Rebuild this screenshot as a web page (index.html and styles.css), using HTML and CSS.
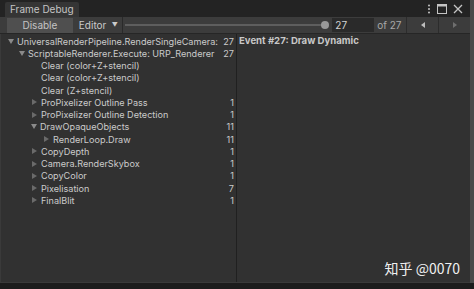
FILE: index.html
```html
<!DOCTYPE html>
<html lang="en">
<head>
    <meta charset="UTF-8">
    <title>Frame Debug</title>
    <link rel="stylesheet" href="styles.css">
</head>
<body>
    <div class="window">
        <div class="titlebar">
            <div class="tab">Frame Debug</div>
            <div class="win-icons">
                <svg width="4" height="10" viewBox="0 0 4 10"><circle cx="2" cy="1.5" r="1" fill="#c4c4c4"/><circle cx="2" cy="5" r="1" fill="#c4c4c4"/><circle cx="2" cy="8.5" r="1" fill="#c4c4c4"/></svg>
                <svg width="10" height="10" viewBox="0 0 10 10"><rect x="0.5" y="0.5" width="9" height="9" fill="none" stroke="#c4c4c4"/><rect x="0.5" y="0.5" width="9" height="2" fill="#c4c4c4"/></svg>
                <svg width="10" height="10" viewBox="0 0 10 10"><path d="M1 1 L9 9 M9 1 L1 9" stroke="#c4c4c4" stroke-width="1.3"/></svg>
            </div>
        </div>

        <div class="toolbar">
            <div class="btn-disable">Disable</div>
            <div class="dropdown">Editor <span class="caret">&#9660;</span></div>
            <div class="slider">
                <div class="track"></div>
                <div class="thumb"></div>
            </div>
            <div class="num-field">27</div>
            <div class="of-label">of 27</div>
            <div class="nav-btn"><span class="tri-left"></span></div>
            <div class="nav-btn"><span class="tri-right"></span></div>
        </div>

        <div class="content">
            <div class="tree">
                <div class="row lvl0"><span class="arrow open"></span><span class="name">UniversalRenderPipeline.RenderSingleCamera:</span><span class="count">27</span></div>
                <div class="row lvl1"><span class="arrow open"></span><span class="name">ScriptableRenderer.Execute: URP_Renderer</span><span class="count">27</span></div>
                <div class="row lvl2"><span class="arrow none"></span><span class="name">Clear (color+Z+stencil)</span><span class="count"></span></div>
                <div class="row lvl2"><span class="arrow none"></span><span class="name">Clear (color+Z+stencil)</span><span class="count"></span></div>
                <div class="row lvl2"><span class="arrow none"></span><span class="name">Clear (Z+stencil)</span><span class="count"></span></div>
                <div class="row lvl2"><span class="arrow"></span><span class="name">ProPixelizer Outline Pass</span><span class="count">1</span></div>
                <div class="row lvl2"><span class="arrow"></span><span class="name">ProPixelizer Outline Detection</span><span class="count">1</span></div>
                <div class="row lvl2"><span class="arrow open"></span><span class="name">DrawOpaqueObjects</span><span class="count">11</span></div>
                <div class="row lvl3"><span class="arrow"></span><span class="name">RenderLoop.Draw</span><span class="count">11</span></div>
                <div class="row lvl2"><span class="arrow"></span><span class="name">CopyDepth</span><span class="count">1</span></div>
                <div class="row lvl2"><span class="arrow"></span><span class="name">Camera.RenderSkybox</span><span class="count">1</span></div>
                <div class="row lvl2"><span class="arrow"></span><span class="name">CopyColor</span><span class="count">1</span></div>
                <div class="row lvl2"><span class="arrow"></span><span class="name">Pixelisation</span><span class="count">7</span></div>
                <div class="row lvl2"><span class="arrow"></span><span class="name">FinalBlit</span><span class="count">1</span></div>
            </div>
            <div class="details">
                <div class="event-title">Event #27: Draw Dynamic</div>
            </div>
        </div>
        <div class="watermark">知乎 @0070</div>
    </div>
</body>
</html>
```

FILE: styles.css
```css
body {
    margin: 0;
    width: 474px;
    height: 289px;
    overflow: hidden;
    background-color: #1c1c1c;
    font-family: Inter, "Noto Sans", "Noto Sans CJK SC", sans-serif;
    color: #cbcbcb;
}
.window {
    position: relative;
    height: 283px;
    display: flex;
    flex-direction: column;
    border-right: 4px solid #4a4a4a;
    box-sizing: border-box;
    width: 474px;
}
.titlebar {
    height: 17px;
    background-color: #232323;
    display: flex;
    align-items: flex-end;
    justify-content: space-between;
    padding-left: 5px;
}
.tab {
    height: 15px;
    width: 74px;
    background-color: #353535;
    border-radius: 2px 2px 0 0;
    font-size: 10px;
    line-height: 15px;
    padding-left: 5px;
    box-sizing: border-box;
    color: #c4c4c4;
}
.win-icons {
    display: flex;
    align-items: center;
    gap: 6px;
    height: 17px;
    padding-right: 7px;
}
.toolbar {
    height: 16px;
    background-color: #3c3c3c;
    border-bottom: 1px solid #262626;
    display: flex;
    align-items: center;
    font-size: 10px;
}
.btn-disable {
    width: 66px;
    height: 15px;
    margin-left: 7px;
    background-color: #4f4f4f;
    text-align: center;
    line-height: 15px;
    color: #c4c4c4;
}
.dropdown {
    width: 48px;
    height: 16px;
    line-height: 16px;
    margin-left: 2px;
    padding-left: 4px;
    box-sizing: border-box;
    border-right: 1px solid #2a2a2a;
    position: relative;
}
.caret {
    position: absolute;
    right: 4px;
    font-size: 6px;
}
.slider {
    position: relative;
    width: 206px;
    height: 16px;
    margin-left: 2px;
}
.track {
    position: absolute;
    left: 0;
    right: 4px;
    top: 7px;
    height: 2px;
    background-color: #5e5e5e;
}
.thumb {
    position: absolute;
    right: 1px;
    top: 4px;
    width: 8px;
    height: 8px;
    border-radius: 50%;
    background-color: #999;
}
.num-field {
    width: 42px;
    height: 14px;
    margin-left: 2px;
    background-color: #2a2a2a;
    line-height: 14px;
    padding-left: 3px;
    box-sizing: border-box;
    font-size: 10px;
    color: #d2d2d2;
}
.of-label {
    width: 29px;
    padding-left: 3px;
    color: #a8a8a8;
}
.nav-btn {
    width: 31px;
    height: 16px;
    border-left: 1px solid #2c2c2c;
    display: flex;
    align-items: center;
    justify-content: center;
}
.tri-left {
    border-top: 3px solid transparent;
    border-bottom: 3px solid transparent;
    border-right: 4px solid #bdbdbd;
}
.tri-right {
    border-top: 3px solid transparent;
    border-bottom: 3px solid transparent;
    border-left: 4px solid #6f6f6f;
}
.content {
    flex: 1;
    display: flex;
    background-color: #313131;
    border-left: 1px solid #3a3a3a;
    border-bottom: 1px solid #3a3a3a;
}
.tree {
    width: 235px;
    padding-top: 1px;
    border-right: 1px solid #202020;
    font-size: 9.1px;
}
.row {
    display: flex;
    align-items: center;
    height: 12.25px;
    white-space: nowrap;
}
.row .name {
    flex: 1;
}
.count {
    padding-left: 3px;
    padding-right: 2px;
}
.lvl0 { padding-left: 7px; }
.lvl1 { padding-left: 18px; }
.lvl2 { padding-left: 30px; }
.lvl3 { padding-left: 42px; }
.arrow {
    width: 0;
    height: 0;
    margin-right: 4px;
    border-top: 3.5px solid transparent;
    border-bottom: 3.5px solid transparent;
    border-left: 5px solid #6a6a6a;
    margin-left: 1px;
}
.arrow.open {
    border-left: 3.5px solid transparent;
    border-right: 3.5px solid transparent;
    border-top: 5px solid #8a8a8a;
    border-bottom: 0;
    margin-left: 0;
    margin-right: 3px;
}
.arrow.none {
    border-color: transparent;
}
.details {
    flex: 1;
    padding: 1px 0 0 2px;
}
.event-title {
    font-size: 9.6px;
    font-weight: bold;
    line-height: 12px;
    color: #c8c8c8;
}
.watermark {
    position: absolute;
    right: 10px;
    bottom: 5px;
    font-size: 14px;
    color: #f0f0f0;
    font-family: "Noto Sans CJK SC", sans-serif;
}
```
